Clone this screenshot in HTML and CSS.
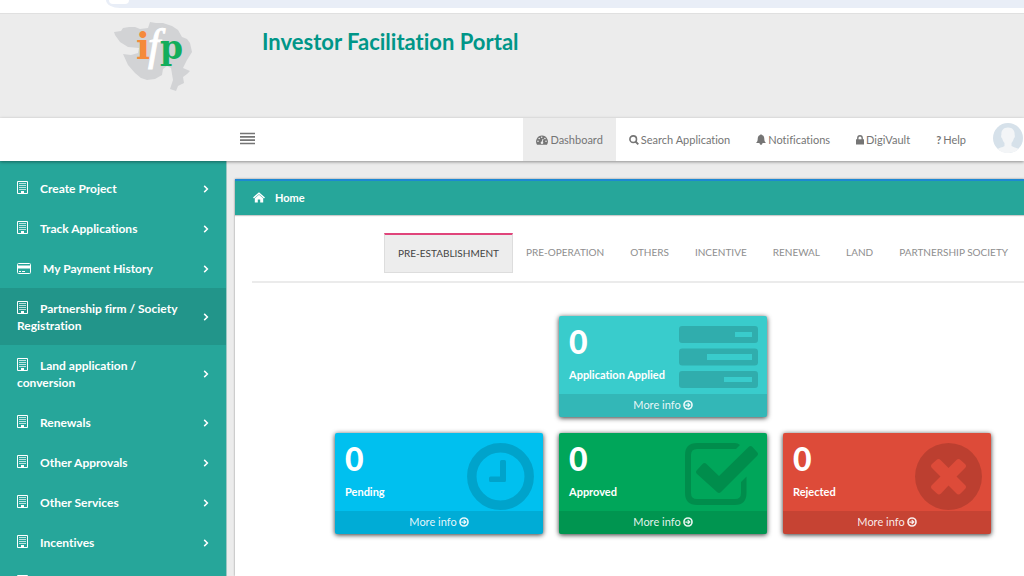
FILE: index.html
```html
<!DOCTYPE html>
<html lang="en">
<head>
  <meta charset="UTF-8" />
  <meta name="viewport" content="width=device-width, initial-scale=1.0" />
  <title>Investor Facilitation Portal</title>
  <link rel="stylesheet" href="styles.css">
</head>
<body>
  <!-- shared icons -->
  <svg class="sprite" aria-hidden="true">
    <symbol id="building" viewBox="0 0 11 13">
      <path d="M.5.5h10v12H.5z" fill="none" stroke="currentColor"/>
      <path d="M2 2.500h7M2 4.500h7M2 6.500h7M2 8.500h7" stroke="currentColor" stroke-width="1" opacity=".7"/>
      <path d="M4 10h3v3H4z" fill="currentColor"/>
    </symbol>
    <symbol id="chevron" viewBox="0 0 6 8">
      <path d="M1.2.9 4.4 4 1.2 7.1" fill="none" stroke="currentColor" stroke-width="1.5"/>
    </symbol>
    <symbol id="arrow" viewBox="0 0 12 12">
      <circle cx="6" cy="6" r="4.8" fill="none" stroke="currentColor" stroke-width="2"/>
      <path d="M2.800 6h5M5.600 3.400 8.200 6 5.600 8.600" fill="none" stroke="currentColor" stroke-width="1.500"/>
    </symbol>
  </svg>

  <div class="browser-bar"><div class="address"><span></span></div></div>

  <header class="banner">
    <svg class="logo" viewBox="0 0 78 70" role="img" aria-label="ifp">
      <path fill="#d2d3d5" d="M0 10l7-1 2-3 6-1 6 0 5 2 8-1 2-6 6 1 7 0 9 3 6 4 4 7 5 2 3 4 2 9-5 8-4 8 7 3-3 3-4 3 1 6-6 3-2 5-6-2 3-9-2-12-4-2-4 3-1 6-7 4-8 1-6-2-6-5-7-8-5-11 8 1 7-2 1-5-11-1-8-5-5-7z"/>
      <text x="22" y="37" font-family="DejaVu Serif" font-weight="bold" font-size="37" fill="#f58a3c">i</text>
      <text x="34" y="38" font-family="Liberation Serif" font-style="italic" font-size="44" fill="#fff" stroke="#fff" stroke-width="1">f</text>
      <text x="46" y="37" font-family="DejaVu Serif" font-weight="bold" font-size="33" fill="#12ad5b">p</text>
    </svg>
    <h1>Investor Facilitation Portal</h1>
  </header>

  <nav class="topbar">
    <button class="menu-btn" aria-label="Toggle menu">
      <svg width="15" height="13" viewBox="0 0 15 13"><path d="M0 1.5h15M0 4.8h15M0 8.2h15M0 11.5h15" stroke="#757575" stroke-width="1.7"/></svg>
    </button>
    <div class="top-links">
      <a href="#" class="active">
        <svg width="12" height="10" viewBox="0 0 12 10"><path fill="currentColor" d="M6 .5a6 6 0 0 0-5 9.2h10A6 6 0 0 0 6 .5z"/><path d="M6 8l1-4" stroke="#eee" stroke-width="1"/><g fill="#eee"><circle cx="6" cy="7.8" r="1.3"/><circle cx="2" cy="6.3" r=".8"/><circle cx="3.2" cy="3.5" r=".8"/><circle cx="5.7" cy="2.2" r=".8"/><circle cx="8.9" cy="3.5" r=".8"/><circle cx="10" cy="6.3" r=".8"/></g></svg>
        Dashboard</a>
      <a href="#">
        <svg width="10" height="10" viewBox="0 0 10 10"><circle cx="4.2" cy="4.2" r="3.3" fill="none" stroke="currentColor" stroke-width="1.6"/><path d="M6.5 6.5l2.8 2.8" stroke="currentColor" stroke-width="1.9"/></svg>
        Search Application</a>
      <a href="#">
        <svg width="10" height="11" viewBox="0 0 10 11"><path fill="currentColor" d="M5 0l.8.9C7.7 1.3 8.3 3 8.3 5c0 2 .7 3 1.7 4H6.5c0 1-.7 1.8-1.5 1.8S3.500 10 3.500 9H0c1-1 1.700-2 1.700-4 0-2 .6-3.700 2.500-4.100z"/></svg>
        Notifications</a>
      <a href="#">
        <svg width="8" height="10" viewBox="0 0 8 10"><path fill="currentColor" d="M0 4.300h8V9.500H0z"/><path d="M1.800 5V3a2.200 2.200 0 0 1 4.400 0v2" fill="none" stroke="currentColor" stroke-width="1.400"/></svg>
        DigiVault</a>
      <a href="#"><b>?</b> Help</a>
    </div>
    <svg class="avatar" viewBox="0 0 30 30" role="img" aria-label="User">
      <circle cx="15" cy="15" r="15" fill="#d6e1ea"/>
      <path fill="#f3f5f7" d="M15 4.500c5 0 7 3.500 6.600 7.500.7.500.2 3-.8 3.500-.5 2-1.500 3.500-2.300 4.500v3c2 1.600 5.500 1.600 7 3.200A15 15 0 0 1 15 30a15 15 0 0 1-10.500-3.800c1.500-1.600 5-1.600 7-3.200v-3c-.8-1-1.800-2.500-2.300-4.500-1-.5-1.500-3-.8-3.500C8 8 10 4.500 15 4.500z"/>
    </svg>
  </nav>

  <div class="layout">
    <aside class="sidebar">
      <a href="#"><span><svg class="ico"><use href="#building"/></svg>Create Project</span><svg class="chev"><use href="#chevron"/></svg></a>
      <a href="#"><span><svg class="ico"><use href="#building"/></svg>Track Applications</span><svg class="chev"><use href="#chevron"/></svg></a>
      <a href="#"><span><svg class="ico card-ico" viewBox="0 0 14 11"><rect x=".5" y=".5" width="13" height="10" rx="1" fill="none" stroke="currentColor"/><path fill="currentColor" d="M0 2.500h14v3H0zM2 8h2v1H2zM5 8h3v1H5z"/></svg>My Payment History</span><svg class="chev"><use href="#chevron"/></svg></a>
      <a href="#" class="active"><span><svg class="ico"><use href="#building"/></svg>Partnership firm / Society Registration</span><svg class="chev"><use href="#chevron"/></svg></a>
      <a href="#"><span><svg class="ico"><use href="#building"/></svg>Land application /<br>conversion</span><svg class="chev"><use href="#chevron"/></svg></a>
      <a href="#"><span><svg class="ico"><use href="#building"/></svg>Renewals</span><svg class="chev"><use href="#chevron"/></svg></a>
      <a href="#"><span><svg class="ico"><use href="#building"/></svg>Other Approvals</span><svg class="chev"><use href="#chevron"/></svg></a>
      <a href="#"><span><svg class="ico"><use href="#building"/></svg>Other Services</span><svg class="chev"><use href="#chevron"/></svg></a>
      <a href="#"><span><svg class="ico"><use href="#building"/></svg>Incentives</span><svg class="chev"><use href="#chevron"/></svg></a>
      <a href="#"><span><svg class="ico"><use href="#building"/></svg></span></a>
    </aside>

    <main class="panel">
      <div class="panel-head">
        <svg width="12" height="11" viewBox="0 0 12 11"><path fill="currentColor" d="M1.800 6.300 6 2.800l4.200 3.500V10.500H7.200V7.500H4.800v3H1.800z"/><path d="M.5 6 6 1.200 11.500 6" fill="none" stroke="currentColor" stroke-width="1.500"/></svg>
        <a href="#">Home</a>
      </div>
      <div class="panel-body">
        <div class="tabs">
          <button class="active">PRE-ESTABLISHMENT</button>
          <button>PRE-OPERATION</button>
          <button>OTHERS</button>
          <button>INCENTIVE</button>
          <button>RENEWAL</button>
          <button>LAND</button>
          <button>PARTNERSHIP SOCIETY</button>
        </div>
        <div class="cards">
          <div class="card applied">
            <div class="card-body">
              <div><h3>0</h3><p>Application Applied</p></div>
              <svg width="79" height="62" viewBox="0 0 79 62"><path fill="currentColor" fill-rule="evenodd" d="M3 0h73q3 0 3 3v11q0 3-3 3H3q-3 0-3-3V3q0-3 3-3zM56 6v5h17V6zM3 22.500h73q3 0 3 3v11q0 3-3 3H3q-3 0-3-3v-11q0-3 3-3zM28 28v6h45v-6zM3 45h73q3 0 3 3v11q0 3-3 3H3q-3 0-3-3V48q0-3 3-3zM45 51v5h28v-5z"/></svg>
            </div>
            <a href="#">More info <svg class="arrow"><use href="#arrow"/></svg></a>
          </div>
          <div class="card pending">
            <div class="card-body">
              <div><h3>0</h3><p>Pending</p></div>
              <svg width="67" height="67" viewBox="0 0 67 67"><circle cx="33.500" cy="33.500" r="28.700" fill="none" stroke="currentColor" stroke-width="9.500"/><path fill="currentColor" d="M34.500 17h3q1.500 0 1.500 1.500v19q0 1.500-1.500 1.500h-14q-1.500 0-1.500-1.500v-2.500q0-1.500 1.500-1.500H33v-15q0-1.500 1.500-1.500z"/></svg>
            </div>
            <a href="#">More info <svg class="arrow"><use href="#arrow"/></svg></a>
          </div>
          <div class="card approved">
            <div class="card-body">
              <div><h3>0</h3><p>Approved</p></div>
              <svg width="73" height="62" viewBox="0 0 73 62"><path fill="currentColor" d="M12 0h38q3 0 5 2l-4 4H12q-6 0-6 6v38q0 6 6 6h38q6 0 6-6V39l5.500-5.500V50q0 12-11.500 12H12Q0 62 0 50V12Q0 0 12 0z"/><path fill="currentColor" d="M12 27l5.500-6q2-2 4 0L34 33 63.500 4q2-2 4 0L72 9q2 2 0 4L36 49q-2 2-4 0L12 31q-2-2 0-4z"/></svg>
            </div>
            <a href="#">More info <svg class="arrow"><use href="#arrow"/></svg></a>
          </div>
          <div class="card rejected">
            <div class="card-body">
              <div><h3>0</h3><p>Rejected</p></div>
              <svg width="67" height="67" viewBox="0 0 67 67"><path fill="currentColor" fill-rule="evenodd" d="M33.500 0a33.500 33.500 0 1 1 0 67 33.500 33.500 0 1 1 0-67zM17 25l8.500 8.500L17 42q-2 2 0 4l5 4.500q2 2 4 0l7.500-8 8 8q2 2 4 0l4.500-4.500q2-2 0-4l-8.500-8.500L50 25q2-2 0-4l-4.500-4q-2-2-4 0l-8 8-8-8q-2-2-4 0L17 21q-2 2 0 4z"/></svg>
            </div>
            <a href="#">More info <svg class="arrow"><use href="#arrow"/></svg></a>
          </div>
        </div>
      </div>
    </main>
  </div>
</body>
</html>
```

FILE: styles.css
```css
* {
  box-sizing: border-box;
}
body {
  margin: 0;
  height: 100vh;
  overflow: hidden;
  display: flex;
  flex-direction: column;
  font-family: Lato, sans-serif;
  font-size: 12px;
  font-variant-ligatures: none;
  background: #ececec;
  color: #757575;
}
a {
  color: inherit;
  text-decoration: none;
}
button {
  font: inherit;
  color: inherit;
  background: none;
  border: none;
  padding: 0;
  cursor: pointer;
}
.sprite {
  display: none;
}
.browser-bar {
  flex: none;
  height: 14px;
  padding-left: 106px;
  background: #fff;
  border-bottom: 1px solid #e0e0e0;
}
.address {
  height: 8px;
  padding-left: 3px;
  overflow: hidden;
  background: #e9eef7;
  border-bottom-left-radius: 14px 8px;
}
.address span {
  display: block;
  width: 20px;
  height: 4px;
  background: #fff;
  border-radius: 0 0 10px 10px;
}
.banner {
  flex: none;
  display: flex;
  align-items: flex-start;
  height: 104px;
  padding: 8px 0 0 114px;
}
.logo {
  width: 78px;
  height: 70px;
  margin-right: 70px;
}
.banner h1 {
  margin: 6px 0 0;
  font-size: 22px;
  line-height: 28px;
  font-weight: 700;
  color: #009688;
}
.topbar {
  flex: none;
  display: flex;
  align-items: center;
  height: 43px;
  padding-left: 240px;
  background: #fff;
  box-shadow: 0 1px 3px rgba(0, 0, 0, 0.4);
  position: relative;
}
.menu-btn {
  height: 15px;
  display: flex;
}
.top-links {
  margin-left: auto;
  display: flex;
  align-self: stretch;
}
.top-links a {
  display: flex;
  align-items: center;
  gap: 2px;
  padding: 0 13px;
  font-size: 11px;
}
.top-links a.active {
  background: #ececec;
}
.avatar {
  width: 30px;
  height: 30px;
  margin: 0 1px 4px 14px;
}
.layout {
  flex: 1;
  min-height: 0;
  display: flex;
}
.sidebar {
  flex: none;
  width: 227px;
  padding-top: 7px;
  overflow: hidden;
  background: #26a69a;
  border-right: 1px solid #9bc7c3;
  color: #fff;
}
.sidebar a {
  display: flex;
  align-items: center;
  justify-content: space-between;
  min-height: 40px;
  padding: 12px 17px 11px;
  line-height: 17px;
  font-weight: 700;
}
.sidebar a.active {
  background: #22958a;
}
.sidebar span {
  max-width: 172px;
}
.ico {
  width: 11px;
  height: 13px;
  margin-right: 12px;
  vertical-align: -1px;
}
.card-ico {
  width: 14px;
  height: 11px;
}
.chev {
  flex: none;
  width: 6px;
  height: 8px;
}
.panel {
  flex: 1;
  min-width: 0;
  margin: 18px 0 0 8px;
  background: #fff;
  box-shadow: 0 0 2px rgba(0, 0, 0, 0.4);
}
.panel-head {
  display: flex;
  align-items: center;
  gap: 10px;
  height: 36px;
  padding: 0 0 2px 18px;
  background: #26a69a;
  border-top: 2px solid #1e88d2;
  box-shadow: 0 1px 1px rgba(0, 0, 0, 0.2);
  color: #fff;
  font-size: 11px;
  font-weight: 700;
}
.panel-body {
  padding: 18px 0 0 17px;
}
.tabs {
  display: flex;
  padding: 0 0 8px 132px;
  border-bottom: 2px solid #ebebeb;
  font-size: 10px;
  color: #8e8e8e;
}
.tabs button {
  height: 40px;
  padding: 0 13px 2px;
  white-space: nowrap;
}
.tabs .active {
  background: #ededed;
  border: 1px solid #ddd;
  border-top: 2px solid #e0457b;
  color: #444;
}
.cards {
  display: grid;
  grid-template-columns: repeat(3, 1fr);
  gap: 16px;
  padding: 33px 33px 0 83px;
}
.card {
  border-radius: 2px;
  overflow: hidden;
  color: #fff;
  box-shadow: 0 1px 5px rgba(0, 0, 0, 0.8);
}
.card-body {
  display: flex;
  justify-content: space-between;
  height: 78px;
  padding: 10px 9px 0 10px;
}
.card-body svg {
  flex: none;
  color: rgba(0, 0, 0, 0.15);
}
.card h3 {
  margin: 0;
  font-size: 32px;
  line-height: 32px;
  font-weight: 900;
}
.card p {
  margin: 9px 0 0;
  font-size: 11px;
  line-height: 16px;
  font-weight: 700;
  white-space: nowrap;
}
.card a {
  display: flex;
  align-items: center;
  justify-content: center;
  gap: 2px;
  height: 23px;
  padding-bottom: 2px;
  background: rgba(0, 0, 0, 0.1);
  color: rgba(255, 255, 255, 0.9);
  font-size: 11px;
}
.arrow {
  width: 10px;
  height: 10px;
}
.applied {
  grid-column: 2;
  background: #39cccc;
}
.pending {
  grid-column: 1;
  background: #00c0ef;
}
.approved {
  background: #00a65a;
}
.rejected {
  background: #dd4b39;
}
```
